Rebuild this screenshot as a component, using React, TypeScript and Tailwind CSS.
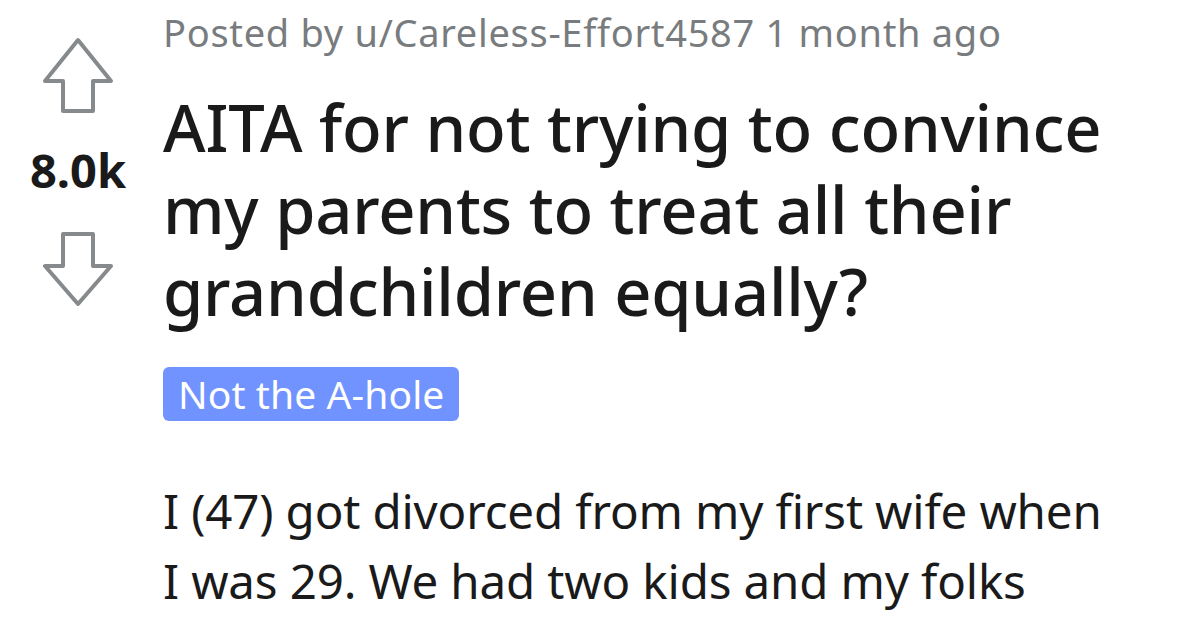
import React from 'react';

const UpArrow: React.FC = () => (
  <svg width="76" height="78" viewBox="0 0 76 78" fill="none">
    <path d="M38 3 L71 44 L53 44 L53 74 L23 74 L23 44 L5 44 Z" stroke="#878a8c" strokeWidth="4" strokeLinejoin="round" />
  </svg>
);

const DownArrow: React.FC = () => (
  <svg width="76" height="78" viewBox="0 0 76 78" fill="none">
    <path d="M23 4 L53 4 L53 36 L71 36 L38 74 L5 36 L23 36 Z" stroke="#878a8c" strokeWidth="4" strokeLinejoin="round" />
  </svg>
);

const App: React.FC = () => {
  return (
    <div className="w-[1200px] h-[628px] bg-white overflow-hidden flex font-['Noto_Sans',sans-serif]">
      {/* Vote column */}
      <div className="w-[156px] flex flex-col items-center pt-[37px] shrink-0">
        <UpArrow />
        <div className="mt-[32px] h-[47px] text-[47px] leading-none font-bold text-[#1a1a1b]">8.0k</div>
        <div className="mt-[36px]"><DownArrow /></div>
      </div>

      {/* Post */}
      <div className="pl-[7px] flex flex-col">
        <div className="mt-[10px] text-[38px] leading-[44px] tracking-[0.7px] text-[#787c7e] whitespace-nowrap">
          Posted by u/Careless-Effort4587 1 month ago
        </div>
        <h1 className="mt-[32px] text-[65px] leading-[82px] tracking-[-0.2px] font-medium text-[#1a1a1b] w-[1000px]">
          AITA for not trying to convince my parents to treat all their grandchildren equally?
        </h1>
        <div className="mt-[35px]">
          <span className="inline-block bg-[#7193ff] text-white rounded-[6px] px-[15px] h-[54px] text-[39px] leading-[54px] tracking-[0.1px]">
            Not the A-hole
          </span>
        </div>
        <div className="mt-[55px] text-[47.5px] leading-[70px] tracking-[-0.15px] text-[#1a1a1b] w-[955px]">
          I (47) got divorced from my first wife when I was 29. We had two kids and my folks
        </div>
      </div>
    </div>
  );
};

export default App;
